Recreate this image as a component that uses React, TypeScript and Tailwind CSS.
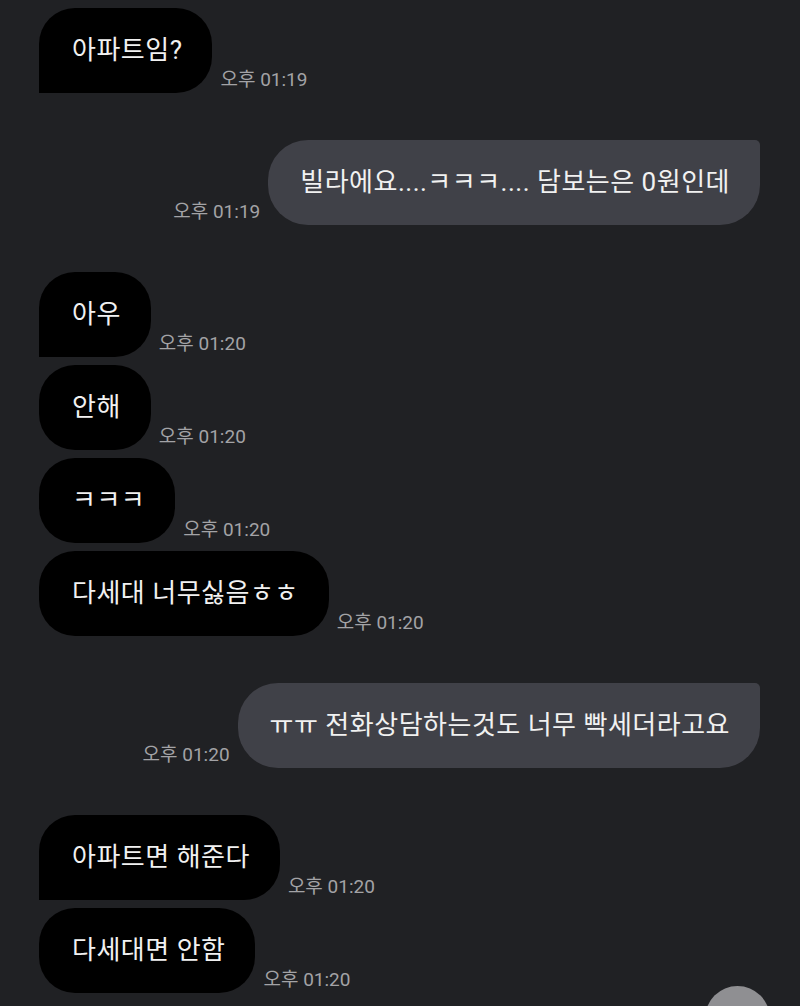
import { ArrowDown } from "lucide-react";

type Msg = { text: string; time: string; mine?: boolean; first?: boolean };

const groups: Msg[][] = [
  [{ text: "아파트임?", time: "오후 01:19", first: true }],
  [{ text: "빌라에요....ㅋㅋㅋ.... 담보는은 0원인데", time: "오후 01:19", mine: true }],
  [
    { text: "아우", time: "오후 01:20", first: true },
    { text: "안해", time: "오후 01:20" },
    { text: "ㅋㅋㅋ", time: "오후 01:20" },
    { text: "다세대 너무싫음ㅎㅎ", time: "오후 01:20" },
  ],
  [{ text: "ㅠㅠ 전화상담하는것도 너무 빡세더라고요", time: "오후 01:20", mine: true }],
  [
    { text: "아파트면 해준다", time: "오후 01:20", first: true },
    { text: "다세대면 안함", time: "오후 01:20" },
  ],
];

const font = { fontFamily: '"Roboto", "Noto Sans CJK KR", sans-serif' };

function Time({ t }: { t: string }) {
  return <span className="text-[19px] leading-[22px] text-[#a3a3a6] mb-[2px] whitespace-nowrap">{t}</span>;
}

function Bubble({ m }: { m: Msg }) {
  if (m.mine) {
    return (
      <div className="flex justify-end items-end gap-2">
        <Time t={m.time} />
        <div className="h-[85px] flex items-center pl-[32px] pr-[30px] bg-[#404148] text-[#f1f1f1] text-[26px] tracking-[0.5px] rounded-[40px] rounded-tr-[5px] whitespace-nowrap">
          {m.text}
        </div>
      </div>
    );
  }
  return (
    <div className="flex items-end gap-2">
      <div
        className={`h-[85px] flex items-center pl-[33px] pr-[30px] bg-black text-[#f1f1f1] text-[26px] tracking-[0.5px] rounded-[36px] whitespace-nowrap ${m.first ? "rounded-bl-none" : ""}`}
      >
        {m.text}
      </div>
      <Time t={m.time} />
    </div>
  );
}

export default function App() {
  return (
    <div className="relative w-full h-[1006px] overflow-hidden bg-[#202124]" style={font}>
      <div className="flex flex-col gap-[47px] pt-[8px] pl-[39px] pr-[40px]">
        {groups.map((g, i) => (
          <div key={i} className="flex flex-col gap-[8px]">
            {g.map((m, j) => (
              <Bubble key={j} m={m} />
            ))}
          </div>
        ))}
      </div>
      <div className="absolute left-[705px] top-[986px] w-[65px] h-[65px] rounded-full bg-[#8f8f92] flex items-center justify-center">
        <ArrowDown size={30} color="#ffffff" strokeWidth={2.5} />
      </div>
    </div>
  );
}
